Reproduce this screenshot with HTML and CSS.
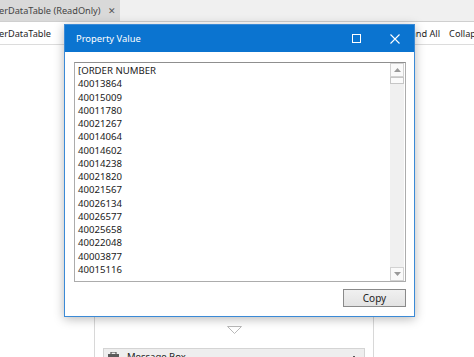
FILE: index.html
```html
<!DOCTYPE html>
<html>
<head>
<meta charset="utf-8">
<link rel="stylesheet" href="styles.css">
</head>
<body>
<div class="tabstrip">
  <div class="tab"><span class="tab-title">erDataTable (ReadOnly)</span><span class="tab-close">✕</span></div>
</div>
<div class="toolbar">
  <span class="crumb">erDataTable</span>
  <span class="action">Expand All</span>
  <span class="action">Collapse All</span>
</div>
<div class="canvas">
  <div class="panel">
    <div class="activity"></div>
    <svg class="arrow" width="15" height="8" viewBox="0 0 15 8"><path d="M0.5 0.5 H14.5 L7.5 7.5 Z" fill="#fff" stroke="#b9b9b9" stroke-width="1"/></svg>
    <div class="msgbox">
      <svg class="msg-icon" width="11" height="10" viewBox="0 0 11 10"><rect x="0" y="2" width="11" height="8" fill="#5a5a5a"/><rect x="3" y="0" width="5" height="3" fill="none" stroke="#5a5a5a" stroke-width="1.2"/></svg>
      <span class="msg-title">Message Box</span>
      <svg class="msg-chev" width="8" height="5" viewBox="0 0 8 5"><path d="M0.5 4.5 L4 1 L7.5 4.5" fill="none" stroke="#555" stroke-width="1"/></svg>
    </div>
  </div>
</div>

<div class="dialog">
  <div class="titlebar">
    <span class="dlg-title">Property Value</span>
    <svg class="btn-max" width="9" height="9" viewBox="0 0 9 9"><rect x="0.5" y="0.5" width="8" height="8" fill="none" stroke="#fff" stroke-width="1"/></svg>
    <svg class="btn-close" width="10" height="10" viewBox="0 0 10 10"><path d="M0.5 0.5 L9.5 9.5 M9.5 0.5 L0.5 9.5" stroke="#fff" stroke-width="1.1"/></svg>
  </div>
  <div class="dlg-body">
    <div class="textbox">
      <div class="lines">
        <div>[ORDER NUMBER</div>
        <div>40013864</div>
        <div>40015009</div>
        <div>40011780</div>
        <div>40021267</div>
        <div>40014064</div>
        <div>40014602</div>
        <div>40014238</div>
        <div>40021820</div>
        <div>40021567</div>
        <div>40026134</div>
        <div>40026577</div>
        <div>40025658</div>
        <div>40022048</div>
        <div>40003877</div>
        <div>40015116</div>
      </div>
      <div class="scrollbar">
        <div class="sb-btn"><svg width="7" height="4" viewBox="0 0 7 4"><path d="M0 4 L3.5 0 L7 4 Z" fill="#9a9a9a"/></svg></div>
        <div class="sb-thumb"></div>
        <div class="sb-track"></div>
        <div class="sb-btn"><svg width="7" height="4" viewBox="0 0 7 4"><path d="M0 0 L3.5 4 L7 0 Z" fill="#9a9a9a"/></svg></div>
      </div>
    </div>
    <div class="buttons">
      <div class="copy">Copy</div>
    </div>
  </div>
</div>
</body>
</html>
```

FILE: styles.css
```css
html, body {
  margin: 0;
  padding: 0;
}
body {
  width: 474px;
  height: 357px;
  overflow: hidden;
  background: #fff;
  font-family: "Noto Sans", "Open Sans", sans-serif;
  color: #1e1e1e;
  position: relative;
}
.tabstrip {
  height: 21px;
  background: #f0f0f0;
  border-bottom: 1px solid #cfcfcf;
  display: flex;
}
.tab {
  width: 120px;
  background: #d9d9d9;
  display: flex;
  align-items: center;
  font-size: 9.2px;
  color: #444;
  white-space: nowrap;
  overflow: hidden;
}
.tab-title {
  margin-left: -1px;
}
.tab-close {
  margin-left: 7px;
  font-size: 8.5px;
  color: #555;
}
.toolbar {
  height: 22px;
  border-bottom: 1px solid #dcdcdc;
  display: flex;
  align-items: center;
  font-size: 9.2px;
  white-space: nowrap;
  overflow: hidden;
}
.crumb {
  flex: 0 0 396px;
  margin-left: -1px;
}
.action {
  margin-right: 9px;
}
.canvas {
  display: flex;
  padding-left: 94px;
  height: 312px;
}
.panel {
  width: 278px;
  border-left: 1px solid #d8d8d8;
  border-right: 1px solid #d8d8d8;
  display: flex;
  flex-direction: column;
  align-items: center;
}
.activity {
  margin-top: 10px;
  width: 172px;
  height: 262px;
  box-sizing: border-box;
  border: 1px solid #6cb356;
  border-radius: 2px;
  flex: none;
}
.arrow {
  margin-top: 9px;
  flex: none;
}
.msgbox {
  margin-top: 14px;
  width: 262px;
  height: 20px;
  box-sizing: border-box;
  background: #eeeeee;
  border: 1px solid #d4d4d4;
  display: flex;
  align-items: flex-start;
  padding: 1px 6px 0 4px;
  flex: none;
}
.msg-icon {
  margin-top: 2px;
}
.msg-title {
  font-size: 9.5px;
  margin-left: 8px;
  color: #222;
}
.msg-chev {
  margin-left: auto;
  margin-top: 5px;
}

.dialog {
  position: absolute;
  left: 64px;
  top: 24px;
  width: 351px;
  height: 293px;
  box-sizing: border-box;
  border: 1px solid #3b8ad6;
  background: #fff;
  box-shadow: 0 2px 10px rgba(0, 0, 0, 0.28);
  display: flex;
  flex-direction: column;
}
.titlebar {
  height: 27px;
  background: #0b74d0;
  display: flex;
  align-items: center;
  flex: none;
}
.dlg-title {
  color: #fff;
  font-size: 9.4px;
  margin-left: 11px;
}
.btn-max {
  margin-left: auto;
}
.btn-close {
  margin-left: 29px;
  margin-right: 14px;
}
.dlg-body {
  flex: 1;
  padding: 10px 8px 9px 9px;
  display: flex;
  flex-direction: column;
}
.textbox {
  height: 220px;
  box-sizing: border-box;
  border: 1px solid #acacac;
  border-top-color: #8f8f8f;
  display: flex;
  flex: none;
}
.lines {
  flex: 1;
  padding: 1px 0 0 3px;
  font-size: 9.6px;
  line-height: 13.27px;
  overflow: hidden;
  color: #1a1a1a;
}
.scrollbar {
  width: 14px;
  margin: 0 1px 0 0;
  background: #f0f0f0;
  display: flex;
  flex-direction: column;
}
.sb-btn {
  height: 14px;
  box-sizing: border-box;
  border: 1px solid #d2d2d2;
  background: #fafafa;
  display: flex;
  align-items: center;
  justify-content: center;
  flex: none;
}
.sb-thumb {
  height: 7px;
  box-sizing: border-box;
  border: 1px solid #c6c6c6;
  background: #fbfbfb;
  flex: none;
}
.sb-track {
  flex: 1;
}
.buttons {
  margin-top: 7px;
  display: flex;
  justify-content: flex-end;
}
.copy {
  width: 63px;
  height: 18px;
  box-sizing: border-box;
  border: 1px solid #8a8a8a;
  background: linear-gradient(#f0f0f0, #e3e3e3);
  font-size: 10px;
  display: flex;
  align-items: center;
  justify-content: center;
  color: #222;
}
```
